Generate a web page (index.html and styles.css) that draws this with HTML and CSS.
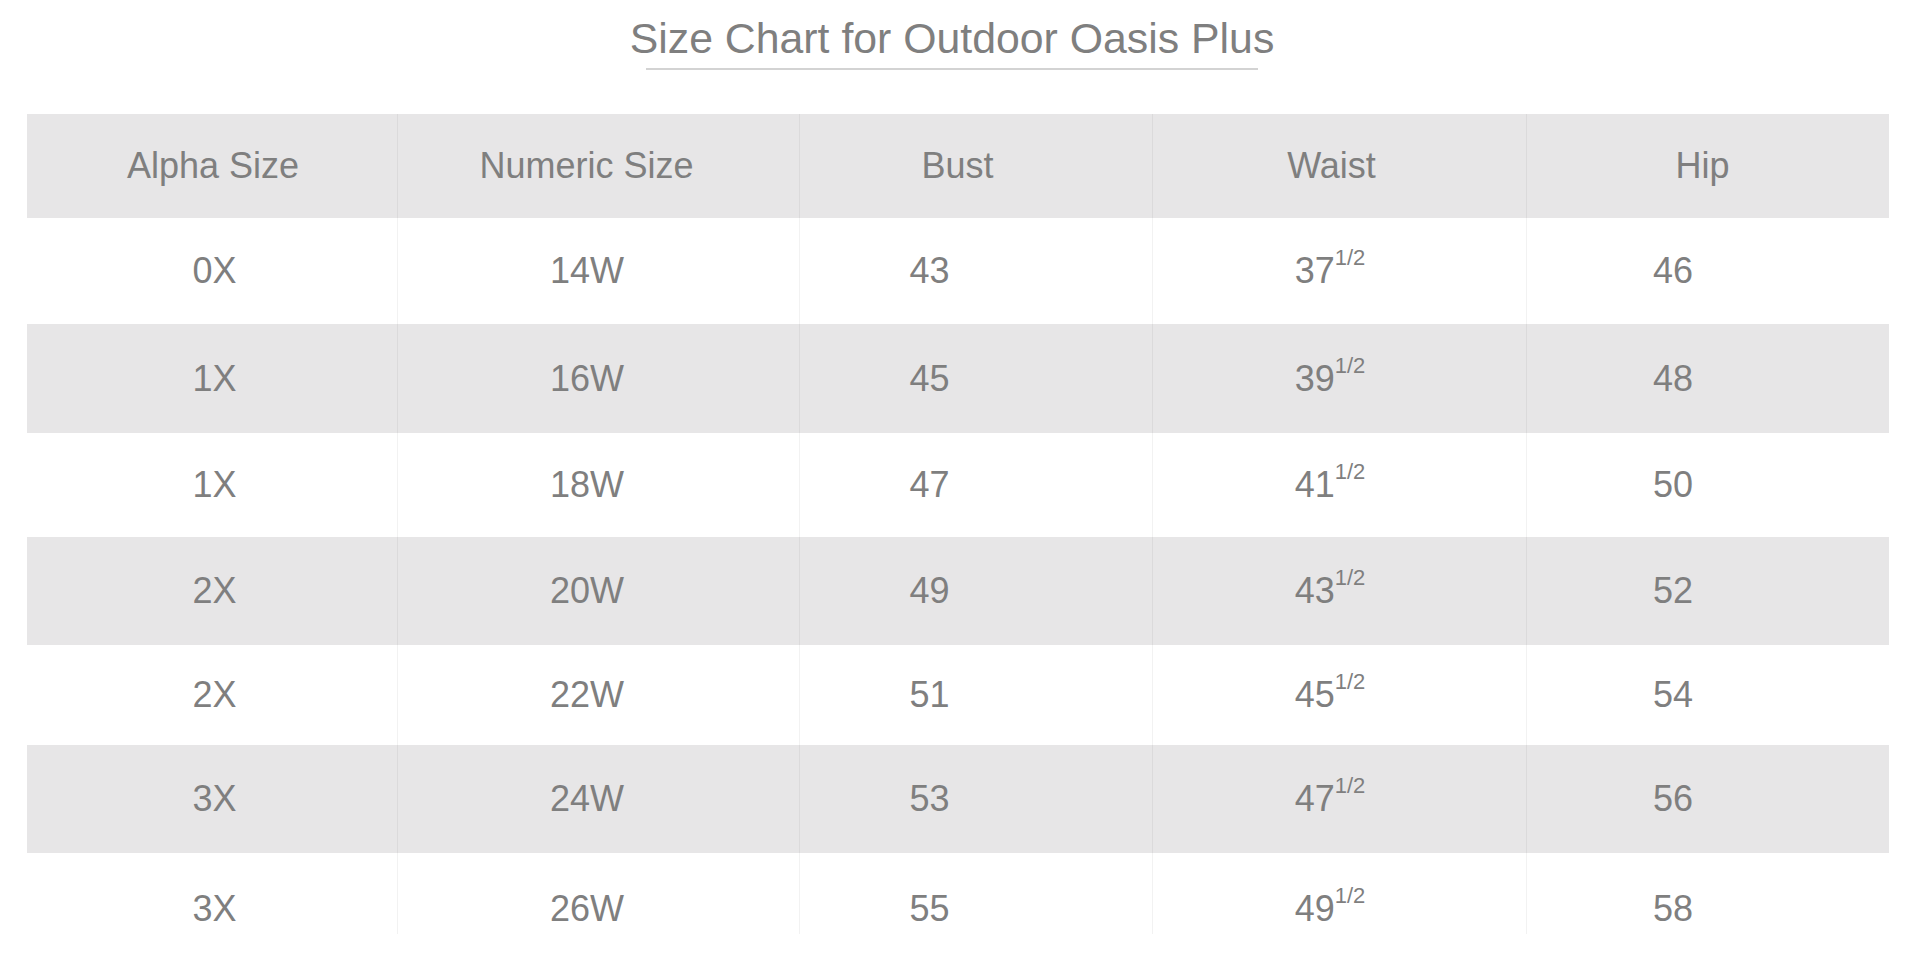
FILE: index.html
```html
<!DOCTYPE html>
<html lang="en">
<head>
<meta charset="utf-8">
<title>Size Chart for Outdoor Oasis Plus</title>
<link rel="stylesheet" href="styles.css">
</head>
<body>
<main class="page">
  <header class="heading">
    <h1 class="title">Size Chart for Outdoor Oasis Plus</h1>
    <div class="rule"></div>
  </header>

  <section class="chart">
    <div class="row head h-104">
      <div class="cell c1">Alpha Size</div>
      <div class="cell c2">Numeric Size</div>
      <div class="cell c3">Bust</div>
      <div class="cell c4">Waist</div>
      <div class="cell c5">Hip</div>
    </div>
    <div class="row body h-106">
      <div class="cell c1">0X</div>
      <div class="cell c2">14W</div>
      <div class="cell c3">43</div>
      <div class="cell c4"><span>37<sup class="frac">1/2</sup></span></div>
      <div class="cell c5">46</div>
    </div>
    <div class="row body alt h-109">
      <div class="cell c1">1X</div>
      <div class="cell c2">16W</div>
      <div class="cell c3">45</div>
      <div class="cell c4"><span>39<sup class="frac">1/2</sup></span></div>
      <div class="cell c5">48</div>
    </div>
    <div class="row body h-104">
      <div class="cell c1">1X</div>
      <div class="cell c2">18W</div>
      <div class="cell c3">47</div>
      <div class="cell c4"><span>41<sup class="frac">1/2</sup></span></div>
      <div class="cell c5">50</div>
    </div>
    <div class="row body alt h-108">
      <div class="cell c1">2X</div>
      <div class="cell c2">20W</div>
      <div class="cell c3">49</div>
      <div class="cell c4"><span>43<sup class="frac">1/2</sup></span></div>
      <div class="cell c5">52</div>
    </div>
    <div class="row body h-100">
      <div class="cell c1">2X</div>
      <div class="cell c2">22W</div>
      <div class="cell c3">51</div>
      <div class="cell c4"><span>45<sup class="frac">1/2</sup></span></div>
      <div class="cell c5">54</div>
    </div>
    <div class="row body alt h-108">
      <div class="cell c1">3X</div>
      <div class="cell c2">24W</div>
      <div class="cell c3">53</div>
      <div class="cell c4"><span>47<sup class="frac">1/2</sup></span></div>
      <div class="cell c5">56</div>
    </div>
    <div class="row body last">
      <div class="cell c1">3X</div>
      <div class="cell c2">26W</div>
      <div class="cell c3">55</div>
      <div class="cell c4"><span>49<sup class="frac">1/2</sup></span></div>
      <div class="cell c5">58</div>
    </div>
  </section>
</main>
</body>
</html>
```

FILE: styles.css
```css
html, body {
  margin: 0;
  padding: 0;
  background: #ffffff;
}

body {
  font-family: "Liberation Sans", Arial, Helvetica, sans-serif;
  color: #808080;
}

.page {
  padding: 0 31px 0 27px;
}

.heading {
  display: flex;
  flex-direction: column;
  align-items: center;
  margin-right: 12px;
  padding-top: 14px;
}

.title {
  margin: 0;
  font-size: 42.8px;
  font-weight: 400;
  line-height: 48px;
  color: #7f7f7f;
  white-space: nowrap;
}

.rule {
  width: 612px;
  height: 2px;
  margin-top: 6px;
  background: #d3d3d3;
}

.chart {
  margin-top: 44px;
  display: flex;
  flex-direction: column;
  width: 1862px;
}

.row {
  display: grid;
  grid-template-columns: 370px 402px 353px 374px 363px;
}

.head,
.alt {
  background: #e7e6e7;
}

.h-100 { height: 100px; }
.h-104 { height: 104px; }
.h-106 { height: 106px; }
.h-108 { height: 108px; }
.h-109 { height: 109px; }

.cell {
  display: flex;
  align-items: center;
  justify-content: center;
  font-size: 36px;
  line-height: 42px;
  color: #7f7f7f;
  white-space: nowrap;
}

.cell + .cell {
  border-left: 1px solid rgba(0, 0, 0, 0.05);
}

/* header horizontal offsets */
.head .c1 { padding-left: 2px; }
.head .c2 { padding-right: 24px; }
.head .c3 { padding-right: 37px; }
.head .c4 { padding-right: 16px; }
.head .c5 { padding-right: 11px; }

/* body horizontal offsets */
.body .c1 { padding-left: 5px; }
.body .c2 { padding-right: 23px; }
.body .c3 { padding-right: 93px; }
.body .c4 { padding-right: 19px; }
.body .c5 { padding-right: 70px; }

.last {
  height: 81px;
}

.last .cell {
  align-items: flex-start;
  padding-top: 35px;
}

.frac {
  font-size: 22px;
  line-height: 0;
  vertical-align: 18px;
}
```
